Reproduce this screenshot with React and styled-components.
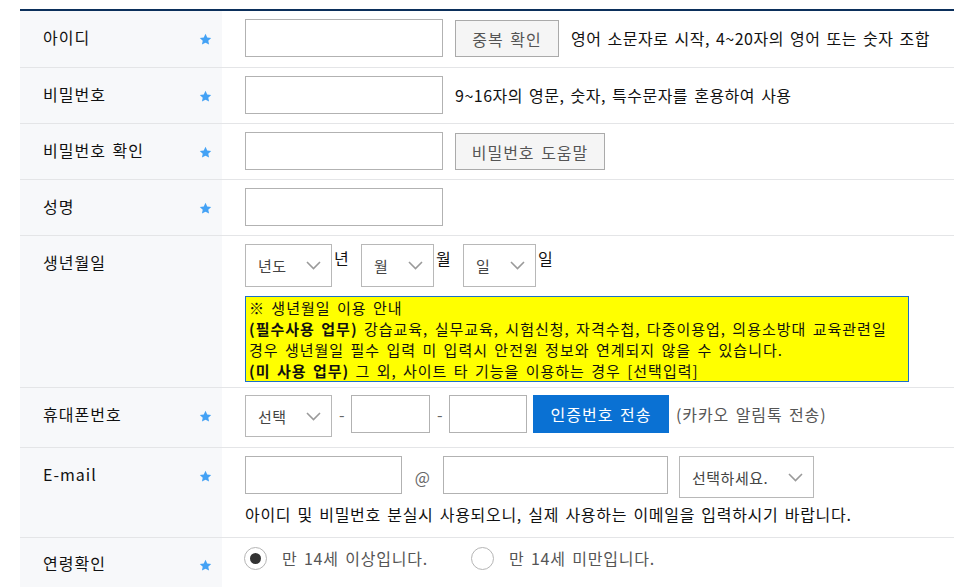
import React from "react";
import styled, { createGlobalStyle } from "styled-components";

const GlobalStyle = createGlobalStyle`
  html, body {
    margin: 0;
    padding: 0;
    background: #fff;
  }
  body {
    font-family: "Noto Sans CJK KR", "Noto Sans", sans-serif;
    color: #111;
    font-size: 16px;
    letter-spacing: 0.5px;
    word-spacing: 2px;
  }
`;

const Page = styled.div`
  padding: 9px 18px 0 20px;
`;

const FormTable = styled.div`
  border-top: 2px solid #0b2f5b;
`;

const Row = styled.div`
  display: grid;
  grid-template-columns: 202px 1fr;
  border-bottom: 1px solid #e4e5e7;
`;

const Head = styled.div`
  background: #f7f8fa;
  display: flex;
  justify-content: space-between;
  align-items: flex-start;
  padding: ${(p) => p.$top ?? 15}px 10px 0 23px;
  font-size: 16px;
  line-height: 22px;
  letter-spacing: 1px;
  color: #111;
`;

const Star = styled.svg`
  width: 13px;
  height: 13px;
  margin-top: 7px;
  fill: #44a2f5;
`;

const Cell = styled.div`
  padding: ${(p) => p.$pad || "8px 0 9px 23px"};
`;

const Line = styled.div`
  display: flex;
  align-items: flex-start;
  gap: ${(p) => p.$gap ?? 12}px;
`;

const TextInput = styled.input`
  box-sizing: border-box;
  width: ${(p) => p.$w}px;
  height: 38px;
  border: 1px solid #b2b2b2;
  margin: 0;
  padding: 0 8px;
  font: inherit;
  background: #fff;
`;

const GrayButton = styled.button`
  box-sizing: border-box;
  width: ${(p) => p.$w}px;
  height: 37px;
  margin: 1px 0 0;
  border: 1px solid #aaa;
  background: #f5f5f5;
  color: #555;
  font-family: inherit;
  font-size: 16px;
  letter-spacing: 1px;
  word-spacing: 2px;
`;

const BlueButton = styled.button`
  box-sizing: border-box;
  width: 136px;
  height: 38px;
  margin: 0 0 0 -1px;
  border: 0;
  background: #0a71d3;
  color: #fff;
  font-family: inherit;
  font-size: 16px;
  letter-spacing: 1px;
  word-spacing: 2px;
`;

const Hint = styled.span`
  line-height: 38px;
  color: ${(p) => (p.$muted ? "#555" : "#111")};
  letter-spacing: ${(p) => (p.$muted ? "0.9px" : "0.5px")};
  white-space: nowrap;
`;

const SelectBox = styled.div`
  box-sizing: border-box;
  width: ${(p) => p.$w}px;
  height: ${(p) => p.$h || 43}px;
  border: 1px solid #b8b8b8;
  background: #fff;
  display: flex;
  align-items: center;
  justify-content: space-between;
  padding: 0 10px 0 12px;
  color: #444;
  font-size: 15px;
`;

const Chevron = styled.svg`
  width: 15px;
  height: 9px;
  fill: none;
  stroke: #9a9a9a;
  stroke-width: 1.6;
`;

const Unit = styled.span`
  font-size: 16px;
  line-height: 20px;
  margin: 4px 0 0 2px;
  width: 27px;
`;

const Notice = styled.div`
  margin-top: 9px;
  width: 664px;
  box-sizing: border-box;
  border: 1px solid #1a6fc9;
  background: #ffff00;
  padding: 0 3px;
  font-size: 15px;
  line-height: 21px;
  letter-spacing: 1px;
  white-space: nowrap;
  b {
    font-weight: 700;
  }
`;

const Dash = styled.span`
  color: #666;
  line-height: 38px;
  width: 5px;
  text-align: center;
`;

const At = styled.span`
  color: #666;
  line-height: 42px;
  width: 41px;
  text-align: center;
`;

const Helper = styled.div`
  margin-top: 4px;
  line-height: 24px;
  letter-spacing: 0.7px;
`;

const RadioGroup = styled.label`
  display: flex;
  align-items: center;
  gap: 15px;
  width: ${(p) => p.$w}px;
  color: #555;
  line-height: 40px;
  letter-spacing: 0.8px;
  white-space: nowrap;
`;

const RadioDot = styled.span`
  box-sizing: border-box;
  flex: none;
  width: 23px;
  height: 23px;
  border-radius: 50%;
  border: 1px solid #b5b5b5;
  background: #fff;
  display: flex;
  align-items: center;
  justify-content: center;
  &::after {
    content: "";
    width: 11px;
    height: 11px;
    border-radius: 50%;
    background: ${(p) => (p.$on ? "#333" : "transparent")};
  }
`;

const StarIcon = () => (
  <Star viewBox="0 0 24 24">
    <path d="M12 1.5l3.2 6.7 7.3.9-5.4 5 1.5 7.3L12 17.8l-6.6 3.6 1.5-7.3-5.4-5 7.3-.9z" />
  </Star>
);

const Select = ({ label, w, h }) => (
  <SelectBox $w={w} $h={h}>
    <span>{label}</span>
    <Chevron viewBox="0 0 15 9">
      <polyline points="1,1 7.5,7.5 14,1" />
    </Chevron>
  </SelectBox>
);

const Label = ({ children, top, required = true }) => (
  <Head $top={top}>
    <span>{children}</span>
    {required && <StarIcon />}
  </Head>
);

export default function App() {
  return (
    <Page>
      <GlobalStyle />
      <FormTable>
        <Row>
          <Label>아이디</Label>
          <Cell $pad="8px 0 10px 23px">
            <Line>
              <TextInput $w={198} />
              <GrayButton $w={104}>중복 확인</GrayButton>
              <Hint>영어 소문자로 시작, 4~20자의 영어 또는 숫자 조합</Hint>
            </Line>
          </Cell>
        </Row>
        <Row>
          <Label>비밀번호</Label>
          <Cell>
            <Line>
              <TextInput $w={198} type="password" />
              <Hint>9~16자의 영문, 숫자, 특수문자를 혼용하여 사용</Hint>
            </Line>
          </Cell>
        </Row>
        <Row>
          <Label>비밀번호 확인</Label>
          <Cell>
            <Line>
              <TextInput $w={198} type="password" />
              <GrayButton $w={150}>비밀번호 도움말</GrayButton>
            </Line>
          </Cell>
        </Row>
        <Row>
          <Label>성명</Label>
          <Cell>
            <Line>
              <TextInput $w={198} />
            </Line>
          </Cell>
        </Row>
        <Row>
          <Label required={false}>생년월일</Label>
          <Cell $pad="8px 0 5px 23px">
            <Line $gap={0}>
              <Select label="년도" w={87} />
              <Unit>년</Unit>
              <Select label="월" w={73} />
              <Unit>월</Unit>
              <Select label="일" w={73} />
              <Unit>일</Unit>
            </Line>
            <Notice>
              ※ 생년월일 이용 안내
              <br />
              <b>(필수사용 업무)</b> 강습교육, 실무교육, 시험신청, 자격수첩, 다중이용업, 의용소방대 교육관련일
              <br />
              경우 생년월일 필수 입력 미 입력시 안전원 정보와 연계되지 않을 수 있습니다.
              <br />
              <b>(미 사용 업무)</b> 그 외, 사이트 타 기능을 이용하는 경우 [선택입력]
            </Notice>
          </Cell>
        </Row>
        <Row>
          <Label>휴대폰번호</Label>
          <Cell $pad="7px 0 10px 23px">
            <Line $gap={7}>
              <Select label="선택" w={87} h={42} />
              <Dash>-</Dash>
              <TextInput $w={79} />
              <Dash>-</Dash>
              <TextInput $w={78} />
              <BlueButton>인증번호 전송</BlueButton>
              <Hint $muted>(카카오 알림톡 전송)</Hint>
            </Line>
          </Cell>
        </Row>
        <Row>
          <Label>E-mail</Label>
          <Cell $pad="8px 0 11px 23px">
            <Line $gap={0}>
              <TextInput $w={157} />
              <At>@</At>
              <TextInput $w={225} />
              <span style={{ width: 11 }} />
              <Select label="선택하세요." w={135} h={42} />
            </Line>
            <Helper>아이디 및 비밀번호 분실시 사용되오니, 실제 사용하는 이메일을 입력하시기 바랍니다.</Helper>
          </Cell>
        </Row>
        <Row>
          <Label top={14}>연령확인</Label>
          <Cell $pad="0 0 10px 22px">
            <Line $gap={0}>
              <RadioGroup $w={227}>
                <RadioDot $on />
                만 14세 이상입니다.
              </RadioGroup>
              <RadioGroup>
                <RadioDot />
                만 14세 미만입니다.
              </RadioGroup>
            </Line>
          </Cell>
        </Row>
      </FormTable>
    </Page>
  );
}
